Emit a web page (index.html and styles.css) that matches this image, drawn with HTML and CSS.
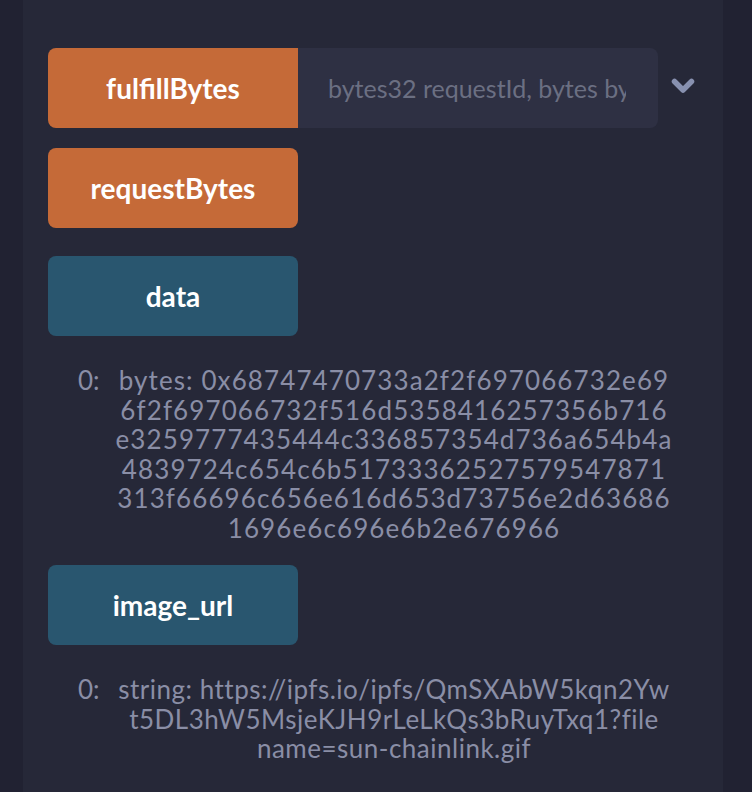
FILE: index.html
```html
<!DOCTYPE html>
<html lang="en">
<head>
    <meta charset="UTF-8">
    <meta name="viewport" content="width=device-width, initial-scale=1.0">
    <title>Deployed Contract</title>
    <link rel="stylesheet" href="styles.css">
</head>
<body>
    <div class="panel">
        <div class="fn-row">
            <button class="btn btn-transact">fulfillBytes</button>
            <input class="fn-args" type="text" placeholder="bytes32 requestId, bytes bytesData">
            <span class="chevron">
                <svg width="24" height="16" viewBox="0 0 24 16">
                    <polyline points="3.5,3.5 12,12 20.5,3.5" fill="none" stroke="#8891b0" stroke-width="5.5" stroke-linecap="round" stroke-linejoin="round"/>
                </svg>
            </span>
        </div>

        <div class="fn-row">
            <button class="btn btn-transact">requestBytes</button>
        </div>

        <div class="fn-row fn-call">
            <button class="btn btn-call">data</button>
        </div>
        <div class="result">
            <span class="result-key">0:</span>
            <span class="result-value">bytes: 0x68747470733a2f2f697066732e69<br>6f2f697066732f516d5358416257356b716<br>e3259777435444c336857354d736a654b4a<br>4839724c654c6b51733362527579547871<br>313f66696c656e616d653d73756e2d63686<br>1696e6c696e6b2e676966</span>
        </div>

        <div class="fn-row fn-call">
            <button class="btn btn-call">image_url</button>
        </div>
        <div class="result result-string">
            <span class="result-key">0:</span>
            <span class="result-value">string: https://ipfs.io/ipfs/QmSXAbW5kqn2Yw<br>t5DL3hW5MsjeKJH9rLeLkQs3bRuyTxq1?file<br>name=sun-chainlink.gif</span>
        </div>
    </div>
</body>
</html>
```

FILE: styles.css
```css
/* dark theme */
body {
    margin: 0;
    background-color: #212232;
    font-family: Lato, "Open Sans", sans-serif;
}

.panel {
    margin: 0 29px 0 23px;
    height: 792px;
    overflow: hidden;
    box-sizing: border-box;
    padding: 48px 25px 0;
    background-color: #262838;
}

.fn-row {
    display: flex;
    align-items: center;
    margin-bottom: 20px;
}

.fn-call {
    margin-top: 28px;
    margin-bottom: 0;
}

.result + .fn-call {
    margin-top: 0;
}

.btn {
    width: 250px;
    height: 80px;
    flex-shrink: 0;
    border: none;
    border-radius: 8px;
    color: #ffffff;
    font-family: Lato, "Open Sans", sans-serif;
    font-size: 28px;
    font-weight: 700;
    cursor: pointer;
}

.btn-transact {
    background-color: #c56a38;
}

.btn-call {
    background-color: #29566f;
}

.fn-row .btn-transact:has(+ .fn-args) {
    border-radius: 8px 0 0 8px;
}

.fn-args {
    width: 360px;
    height: 80px;
    box-sizing: border-box;
    padding: 0 32px 0 30px;
    border: none;
    border-radius: 0 8px 8px 0;
    background-color: #2e3043;
    color: #a2a3bd;
    font-family: Lato, "Open Sans", sans-serif;
    font-size: 25px;
    outline: none;
}

.fn-args::placeholder {
    color: #6b6f82;
}

.chevron {
    display: flex;
    margin-left: 13px;
    margin-top: -4px;
}

.result {
    display: flex;
    padding: 30px 22px 22px 30px;
    color: #8a8ea6;
    font-size: 26px;
    line-height: 29.5px;
    letter-spacing: 1.1px;
}

.result-string {
    letter-spacing: 0.5px;
}

.result-key {
    width: 34px;
    flex-shrink: 0;
    letter-spacing: 0;
}

.result-value {
    flex: 1;
    text-align: center;
    white-space: nowrap;
}
```
